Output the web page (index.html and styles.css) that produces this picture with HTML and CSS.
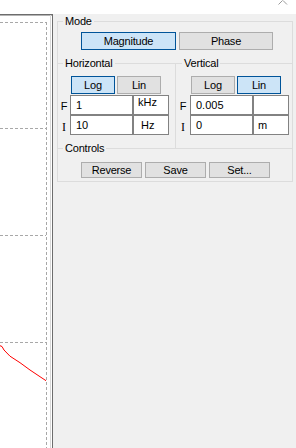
FILE: index.html
```html
<!DOCTYPE html>
<html lang="en">
<head>
    <meta charset="UTF-8">
    <meta name="viewport" content="width=device-width, initial-scale=1.0">
    <title>Scale</title>
    <link rel="stylesheet" href="styles.css">
</head>
<body>
    <div class="titlebar">
        <svg class="close" width="10" height="5" viewBox="0 0 10 5">
            <path d="M0.5 4.5 L4.5 0.5 M5 0.5 L9 4.5" stroke="#9a9a9a" stroke-width="1" fill="none"/>
        </svg>
    </div>
    <div class="main">
        <div class="plot">
            <svg width="52" height="433" viewBox="0 0 52 433">
                <line x1="0" y1="0.5" x2="52" y2="0.5" stroke="#b4b4b4"/>
                <line x1="50.5" y1="0" x2="50.5" y2="433" stroke="#d8d8d8"/>
                <g stroke="#a8a8a8" stroke-dasharray="3 2">
                    <line x1="0" y1="7.5" x2="46" y2="7.5"/>
                    <line x1="0" y1="113.5" x2="46" y2="113.5"/>
                    <line x1="0" y1="220.5" x2="46" y2="220.5"/>
                    <line x1="0" y1="327.5" x2="46" y2="327.5"/>
                    <line x1="46.5" y1="7" x2="46.5" y2="433"/>
                </g>
                <polyline points="0,330.7 2,331.5 4,335 10,341.2 20,347.7 30,355 40,361.7 46,365.7" stroke="#ff0000" fill="none"/>
            </svg>
        </div>
        <div class="panel">
            <fieldset class="group">
                <legend>Mode</legend>
                <div class="mode-row">
                    <button class="btn on mag">Magnitude</button>
                    <button class="btn phase">Phase</button>
                </div>
                <div class="axes">
                    <fieldset class="axis horiz">
                        <legend>Horizontal</legend>
                        <div class="scale-row">
                            <button class="btn on">Log</button>
                            <button class="btn">Lin</button>
                        </div>
                        <div class="field-row">
                            <span class="lbl">F</span>
                            <div class="box val">1</div>
                            <div class="box unit up">kHz</div>
                        </div>
                        <div class="field-row">
                            <span class="lbl serif">I</span>
                            <div class="box val">10</div>
                            <div class="box unit wide-pad">Hz</div>
                        </div>
                    </fieldset>
                    <fieldset class="axis vert">
                        <legend>Vertical</legend>
                        <div class="scale-row">
                            <button class="btn">Log</button>
                            <button class="btn on">Lin</button>
                        </div>
                        <div class="field-row">
                            <span class="lbl">F</span>
                            <div class="box val">0.005</div>
                            <div class="box unit"></div>
                        </div>
                        <div class="field-row">
                            <span class="lbl serif">I</span>
                            <div class="box val">0</div>
                            <div class="box unit">m</div>
                        </div>
                    </fieldset>
                </div>
                <fieldset class="controls">
                    <legend>Controls</legend>
                    <div class="ctrl-row">
                        <button class="btn">Reverse</button>
                        <button class="btn">Save</button>
                        <button class="btn">Set...</button>
                    </div>
                </fieldset>
            </fieldset>
        </div>
    </div>
</body>
</html>
```

FILE: styles.css
```css
body {
    margin: 0;
    width: 296px;
    height: 448px;
    overflow: hidden;
    background: #fff;
    font-family: "Liberation Sans", Arial, sans-serif;
    font-size: 11px;
    color: #000;
}
.titlebar {
    height: 14px;
    display: flex;
    justify-content: flex-end;
    align-items: flex-start;
    padding-right: 8px;
}
.close {
    display: block;
}
.main {
    display: flex;
    height: 434px;
}
.plot {
    width: 53px;
    flex: none;
    border-top: 1px solid #6d6d6d;
    border-right: 1px solid #6d6d6d;
    box-sizing: border-box;
    background: #fff;
}
.plot svg {
    display: block;
}
.panel {
    flex: 1;
    background: #f0f0f0;
    padding: 1px 3px 0 4px;
}
fieldset {
    margin: 0;
    padding: 0;
    min-width: 0;
    border: none;
}
legend {
    padding: 0 2px;
    margin-left: 5px;
    line-height: 13px;
    letter-spacing: -0.2px;
}
.group {
    border: 1px solid #dcdcdc;
    padding-bottom: 3px;
}
.btn {
    box-sizing: border-box;
    height: 18px;
    width: 44px;
    padding: 0;
    margin: 0;
    border: 1px solid #adadad;
    background: #e1e1e1;
    font-family: "Liberation Sans", Arial, sans-serif;
    font-size: 11px;
    letter-spacing: -0.2px;
    color: #000;
}
.btn.on {
    background: #cce4f7;
    border-color: #005499;
}
.mode-row {
    display: flex;
    gap: 3px;
    margin: 4px 0 0 23px;
}
.mode-row .mag {
    width: 95px;
}
.mode-row .phase {
    width: 94px;
}
.axes {
    display: flex;
    margin-top: 7px;
}
.axis {
    border-top: 1px solid #dcdcdc;
    padding-bottom: 13px;
}
.horiz {
    width: 118px;
    box-sizing: border-box;
    border-right: 1px solid #dcdcdc;
}
.vert {
    flex: 1;
}
.vert legend {
    margin-left: 6px;
}
.scale-row {
    display: flex;
    gap: 2px;
    margin: 6px 0 0 13px;
}
.vert .scale-row {
    margin-left: 15px;
}
.field-row {
    display: flex;
    height: 20px;
}
.scale-row + .field-row {
    margin-top: 1px;
}
.lbl {
    width: 12px;
    text-align: center;
    line-height: 22px;
    font-size: 11px;
}
.vert .lbl {
    width: 14px;
}
.lbl.serif {
    font-family: "Liberation Serif", "Times New Roman", serif;
    font-size: 12px;
    line-height: 24px;
}
.box {
    box-sizing: border-box;
    height: 20px;
    border: 1px solid #828282;
    background: #fff;
    line-height: 19px;
    padding-left: 5px;
}
.val {
    width: 63px;
}
.unit {
    width: 36px;
    padding-left: 4px;
}
.unit.up {
    line-height: 12px;
}
.unit.wide-pad {
    padding-left: 7px;
}
.controls {
    border-top: 1px solid #dcdcdc;
    margin-top: -6px;
}
.ctrl-row {
    display: flex;
    gap: 3px;
    margin: 7px 0 0 23px;
}
.ctrl-row .btn {
    width: 61px;
    height: 16px;
    line-height: 14px;
}
```
